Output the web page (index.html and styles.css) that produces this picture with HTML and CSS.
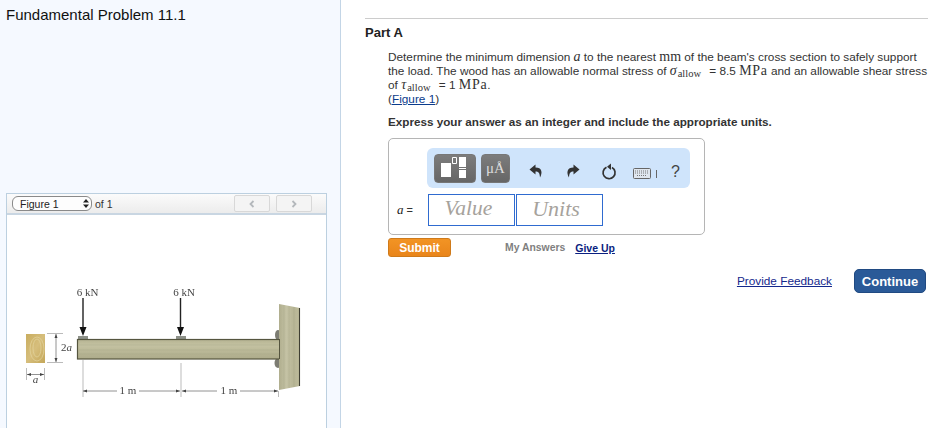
FILE: index.html
```html
<!DOCTYPE html>
<html lang="en">
<head>
<meta charset="utf-8">
<title>Fundamental Problem 11.1</title>
<link rel="stylesheet" href="styles.css">
</head>
<body>
<div class="page">
  <aside class="left">
    <h1 class="title">Fundamental Problem 11.1</h1>
    <section class="figure">
      <div class="figbar">
        <div class="select"><span class="select-label">Figure 1</span>
          <svg class="spin" width="6" height="9" viewBox="0 0 6 9"><path d="M3 0L6 3.600H0ZM3 9L0 5.400H6Z" fill="#222"/></svg>
        </div>
        <span class="of">of 1</span>
        <div class="navs">
          <span class="nav"><svg width="6" height="8" viewBox="0 0 6 8"><path d="M4.500 1L1.500 4L4.500 7" fill="none" stroke="#b4b8bc" stroke-width="1.800"/></svg></span>
          <span class="nav"><svg width="6" height="8" viewBox="0 0 6 8"><path d="M1.500 1L4.500 4L1.500 7" fill="none" stroke="#b4b8bc" stroke-width="1.800"/></svg></span>
        </div>
      </div>
      <svg class="diagram" width="319" height="213" viewBox="7 215 319 213">
        <defs>
          <linearGradient id="beam" x1="0" y1="0" x2="0" y2="1">
            <stop offset="0" stop-color="#b5b392"/><stop offset=".3" stop-color="#c4c2a2"/>
            <stop offset=".6" stop-color="#bab897"/><stop offset="1" stop-color="#adab8a"/>
          </linearGradient>
          <linearGradient id="wall" x1="0" y1="0" x2="1" y2="0">
            <stop offset="0" stop-color="#b0ae8e"/><stop offset=".35" stop-color="#c4c2a4"/>
            <stop offset=".7" stop-color="#b7b595"/><stop offset="1" stop-color="#bdbb9b"/>
          </linearGradient>
          <linearGradient id="end" x1="0" y1="0" x2="1" y2="1">
            <stop offset="0" stop-color="#c9ad5f"/><stop offset=".5" stop-color="#d6be7c"/><stop offset="1" stop-color="#c4a75a"/>
          </linearGradient>
        </defs>
        <ellipse class="bolt" cx="278" cy="335" rx="3" ry="5"/>
        <ellipse class="bolt" cx="278" cy="363" rx="3.500" ry="5"/>
        <rect class="plate" x="78" y="336" width="10" height="3.500"/>
        <rect class="plate" x="176" y="336" width="10" height="3.500"/>
        <rect x="77.500" y="339.500" width="203" height="19.500" fill="url(#beam)" stroke="#55553f" stroke-width="1.200"/>
        <path class="grain" d="M79 345H279M79 350H279M79 354H279"/>
        <path d="M279 304L300 308V386L279 390Z" fill="url(#wall)"/>
        <path d="M299.500 308V386" stroke="#3f3f33" stroke-width="1.100"/>
        <path d="M279.500 339V359" stroke="#55553f" stroke-width="1"/>
        <path class="grain" d="M284 305V389M289 306V388M294 307V387"/>
        <path class="shaft" d="M83 298V329M180.500 298V329"/>
        <path d="M79.500 327H86.500L83 336ZM177 327H184L180.500 336Z" fill="#111"/>
        <text class="label" x="87.500" y="296" text-anchor="middle">6 kN</text>
        <text class="label" x="184" y="296" text-anchor="middle">6 kN</text>
        <rect x="26" y="334" width="19" height="29" fill="url(#end)"/>
        <ellipse class="ring" cx="37" cy="348" rx="4" ry="9"/>
        <ellipse class="ring" cx="37" cy="349" rx="7" ry="12"/>
        <path class="dim" d="M47 333.500H63M47 362.500H63M26.500 368V380M44.500 368V380M83 360V397M181 363V397M278.500 391V397"/>
        <path class="dimd" d="M56 334V362M27 374.500H44M83 391H117M139 391H180M182 391H217M240 391H278"/>
        <path class="head" d="M56 334L54.500 338H57.500ZM56 362L54.500 358H57.500ZM27 374.500L31 373V376ZM44 374.500L40 373V376ZM83 391L87 389.500V392.500ZM180 391L176 389.500V392.500ZM182 391L186 389.500V392.500ZM278 391L274 389.500V392.500Z"/>
        <text class="label" x="61" y="351">2<tspan class="ital">a</tspan></text>
        <text class="label ital" x="35.500" y="383" text-anchor="middle">a</text>
        <text class="label" x="128" y="394" text-anchor="middle">1 m</text>
        <text class="label" x="229" y="394" text-anchor="middle">1 m</text>
      </svg>
    </section>
  </aside>
  <main class="right">
    <h2 class="part">Part A</h2>
    <div class="body">
      <p class="question">Determine the minimum dimension <i class="m">a</i> to the nearest <span class="m">mm</span> of the beam's cross section to safely support<br>the load. The wood has an allowable normal stress of <i class="m">σ</i><sub class="m">allow</sub> = 8.5 <span class="m mpa">MPa</span> and an allowable shear stress<br>of <i class="m">τ</i><sub class="m">allow</sub> = 1 <span class="m mpa">MPa</span>.<br>(<a class="link" href="#">Figure 1</a>)</p>
      <p class="instr">Express your answer as an integer and include the appropriate units.</p>
      <div class="answer">
        <div class="tools">
          <span class="tbtn tbtn-wide">
            <svg width="36" height="24" viewBox="0 0 36 24"><path fill="#fff" d="M4 6H14V20H4ZM22 0H29V10H22ZM22 11H29V12H22ZM22 13H29V21H22Z"/><path fill="none" stroke="#fff" d="M15.500 .5H19.500V6.500H15.500Z"/></svg>
          </span>
          <span class="tbtn tbtn-unit">μÅ</span>
          <svg class="ico ico-undo" width="14" height="14" viewBox="0 0 14 14"><path fill="#333" d="M6.500 .5L.5 5.500L6.500 10.500V7.500C9.500 7.500 10.800 9 11 13.500C13.800 8.500 13 3.500 6.500 3.500Z"/></svg>
          <svg class="ico ico-redo" width="14" height="14" viewBox="0 0 14 14"><path fill="#333" d="M7.500 .5L13.500 5.500L7.500 10.500V7.500C4.500 7.500 3.200 9 3 13.500C.2 8.500 1 3.500 7.500 3.500Z"/></svg>
          <svg class="ico ico-reset" width="16" height="18" viewBox="0 0 16 18"><path fill="none" stroke="#333" stroke-width="1.700" d="M5.500 4.300A6 6 0 1 0 11 4.500"/><path fill="#333" d="M10 .5V7L6 3.800Z"/></svg>
          <svg class="ico ico-keys" width="18" height="11" viewBox="0 0 18 11"><rect x=".5" y=".5" width="17" height="10" rx="1" fill="#dfe6ee" stroke="#666"/><path stroke="#777" stroke-dasharray="1 1" d="M2 3H16M2 5H16M4 7.500H14"/></svg>
          <span class="sep"></span>
          <span class="help">?</span>
        </div>
        <div class="entry">
          <span class="var"><i class="m">a</i> =</span>
          <span class="field field-value">Value</span>
          <span class="field">Units</span>
        </div>
      </div>
      <div class="actions">
        <span class="submit">Submit</span>
        <span class="my">My Answers</span>
        <a class="giveup" href="#">Give Up</a>
      </div>
    </div>
    <div class="foot">
      <a class="feedback" href="#">Provide Feedback</a>
      <span class="continue">Continue</span>
    </div>
  </main>
</div>
</body>
</html>
```

FILE: styles.css
```css
* { box-sizing: border-box; }
html, body { margin: 0; height: 100%; overflow: hidden; }
body { background: #fff; font-family: "Liberation Sans", Arial, sans-serif; color: #333; }
.page { display: flex; width: 938px; height: 428px; }

.left { width: 341px; flex: none; height: 428px; background: #f5f9ff; border-right: 1px solid #c3d5e6; padding: 6px 0 0 6px; display: flex; flex-direction: column; }
.title { margin: 0; font-size: 15px; line-height: 17px; font-weight: 400; color: #111; }
.figure { margin-top: 170px; width: 321px; flex: 1; background: #fff; border: 1px solid #bcd0e0; border-bottom: 0; display: flex; flex-direction: column; }
.figbar { height: 21px; flex: none; background: linear-gradient(#fbfbfb, #ececec); border-bottom: 2px solid #c9d6e2; display: flex; align-items: center; padding: 0 14px 0 5px; }
.select { width: 80px; height: 15px; border: 1px solid #8a8a8a; border-radius: 6px; background: #fdfdfd; display: flex; align-items: center; justify-content: space-between; padding: 0 2px 0 7px; font-size: 10.500px; color: #222; }
.of { font-size: 10.500px; color: #333; margin-left: 3px; }
.navs { margin-left: auto; display: flex; gap: 6px; }
.nav { width: 36px; height: 17px; border: 1px solid #d8d8d8; border-radius: 2px; background: #f4f4f4; display: flex; align-items: center; justify-content: center; }
.diagram { display: block; filter: blur(.35px); }
.label { font-family: "Liberation Serif", serif; font-size: 11px; fill: #444; }
.ital { font-style: italic; }
.plate { fill: #8d9189; }
.bolt { fill: #7c7c72; }
.grain { fill: none; stroke: #a3a183; stroke-width: .6; opacity: .55; }
.shaft { fill: none; stroke: #222; stroke-width: 1.400; }
.ring { fill: none; stroke: #e6d8a4; stroke-width: .8; opacity: .8; }
.dim { fill: none; stroke: #bbb; stroke-width: 1; }
.dimd { fill: none; stroke: #777; stroke-width: .8; }
.head { fill: #444; }

.right { flex: 1; min-width: 0; padding: 18px 10px 0 24px; display: flex; flex-direction: column; }
.part { margin: 0; border-top: 1px solid #ccc; padding-top: 6px; font-size: 13px; line-height: 15px; font-weight: 700; color: #222; }
.body { padding: 10px 0 0 23px; width: 563px; }
.question { margin: 0; font-size: 11.800px; line-height: 14px; color: #333; white-space: nowrap; }
.m { font-family: "Liberation Serif", serif; font-size: 14px; line-height: 10px; color: #333; }
.mpa { letter-spacing: .7px; }
sub.m { font-size: 10.500px; line-height: 0; vertical-align: -2px; margin: 0 5px 0 1px; }
.link { color: #0b3c8c; }
.instr { margin: 9px 0 0; font-size: 11.700px; line-height: 14px; font-weight: 700; color: #333; }
.answer { margin-top: 9px; width: 317px; height: 97px; border: 1px solid #b5b5b5; border-radius: 5px; padding: 9px 14px 0 38px; }
.tools { height: 40px; background: #cfe4fb; border-radius: 6px; display: flex; align-items: flex-start; padding: 6px 0 0 7px; }
.tbtn { height: 29px; background: linear-gradient(#7c7c7c, #666); border: 1px solid #777; border-radius: 4px; display: flex; align-items: center; justify-content: center; }
.tbtn-wide { width: 42px; }
.tbtn-unit { width: 29px; margin-left: 5px; color: #ddd; font-family: "Liberation Serif", serif; font-size: 15px; }
.ico { flex: none; margin-top: 10px; }
.ico-undo { margin-left: 19px; }
.ico-redo { margin-left: 23px; }
.ico-reset { margin-left: 21px; margin-top: 9px; }
.ico-keys { margin-left: 16px; margin-top: 14px; }
.sep { width: 1px; height: 8px; background: #666; margin: 16px 0 0 5px; }
.help { margin: 9px 0 0 14px; font-size: 16px; line-height: 18px; color: #444; }
.entry { display: flex; align-items: center; margin: 6px 0 0 -30px; }
.var { width: 31px; font-size: 11px; color: #333; }
.var .m { font-size: 13px; color: #222; }
.field { width: 87px; height: 32px; margin-right: 1px; border: 1px solid #2f6bd0; padding: 0 7px 3px 0; font-family: "Liberation Serif", serif; font-style: italic; font-size: 22px; color: #a6a29c; display: flex; align-items: center; justify-content: center; }
.field-value { padding-right: 6px; font-size: 21.500px; }
.actions { display: flex; align-items: center; margin-top: 3px; height: 19px; }
.submit { width: 63px; height: 19px; background: linear-gradient(#f29424, #e9851b); border: 1px solid #cf7a1a; border-radius: 3px; color: #fff; font-size: 12px; font-weight: 700; display: flex; align-items: center; justify-content: center; }
.my { margin-left: 54px; font-size: 10.400px; font-weight: 700; color: #7f7f7f; }
.giveup { margin-left: 10px; font-size: 10.500px; font-weight: 700; color: #0a1f80; }
.foot { display: flex; align-items: center; justify-content: flex-end; margin-top: 12px; padding-right: 2px; }
.feedback { font-size: 11.800px; color: #14288c; }
.continue { margin-left: 22px; width: 72px; height: 24px; background: #2a5a98; border: 1px solid #204a82; border-radius: 5px; color: #fff; font-size: 13px; font-weight: 700; display: flex; align-items: center; justify-content: center; }
```
